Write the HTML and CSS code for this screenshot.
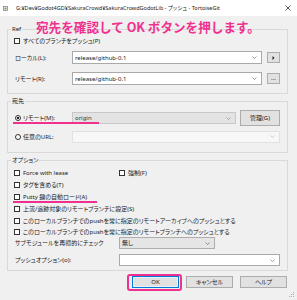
FILE: index.html
```html
<!DOCTYPE html>
<html lang="ja">
<head>
<meta charset="utf-8">
<link rel="stylesheet" href="styles.css">
</head>
<body>
<div class="window">
  <div class="titlebar">
    <svg class="app-icon" width="5" height="5" viewBox="0 0 5 5"><rect x="0.5" y="0.5" width="4" height="4" fill="#fff" stroke="#888" stroke-width="0.8"/><rect x="1.5" y="1.5" width="2" height="2" fill="#6a9a4a"/></svg>
    <span class="title">G:¥Dev¥Godot4GD¥SakuraCrowd¥SakuraCrowdGodotLib - プッシュ - TortoiseGit</span>
    <svg class="close" width="6" height="6" viewBox="0 0 6 6"><path d="M0.5 0.5 L5.5 5.5 M5.5 0.5 L0.5 5.5" stroke="#333" stroke-width="0.8"/></svg>
  </div>
  <div class="content">
    <fieldset class="group group-ref">
      <legend>Ref</legend>
      <div class="row row-check first"><span class="box"></span><span>すべてのブランチをプッシュ(P)</span></div>
      <div class="row row-field local">
        <span class="lbl">ローカル(L):</span>
        <div class="combo grow"><span>release/github-0.1</span><svg class="chev" width="5" height="3" viewBox="0 0 5 3"><path d="M0.5 0.5 L2.5 2.5 L4.5 0.5" fill="none" stroke="#777" stroke-width="0.7"/></svg></div>
        <div class="btn mini"><svg width="3" height="4" viewBox="0 0 3 4"><path d="M0.5 0 L2.5 2 L0.5 4 Z" fill="#222"/></svg></div>
      </div>
      <div class="row row-field remote">
        <span class="lbl">リモート(R):</span>
        <div class="combo grow"><span>release/github-0.1</span><svg class="chev" width="5" height="3" viewBox="0 0 5 3"><path d="M0.5 0.5 L2.5 2.5 L4.5 0.5" fill="none" stroke="#777" stroke-width="0.7"/></svg></div>
        <div class="btn mini dots">...</div>
      </div>
    </fieldset>

    <fieldset class="group group-dest">
      <legend>宛先</legend>
      <div class="row row-field dest-remote">
        <span class="lbl"><span class="radio on"></span>リモート(M):</span>
        <div class="combo disabled grow"><span>origin</span><svg class="chev" width="5" height="3" viewBox="0 0 5 3"><path d="M0.5 0.5 L2.5 2.5 L4.5 0.5" fill="none" stroke="#888" stroke-width="0.7"/></svg></div>
        <div class="btn manage">管理(G)</div>
      </div>
      <div class="row row-field dest-url">
        <span class="lbl"><span class="radio"></span>任意のURL:</span>
        <div class="combo faint grow"><span></span><svg class="chev" width="5" height="3" viewBox="0 0 5 3"><path d="M0.5 0.5 L2.5 2.5 L4.5 0.5" fill="none" stroke="#bbb" stroke-width="0.7"/></svg></div>
      </div>
    </fieldset>

    <fieldset class="group group-opt">
      <legend>オプション</legend>
      <div class="row row-check first h12">
        <span class="opt-col"><span class="box"></span><span>Force with lease</span></span>
        <span class="box"></span><span>強制(F)</span>
      </div>
      <div class="row row-check h12"><span class="box"></span><span>タグを含める(T)</span></div>
      <div class="row row-check h12"><span class="box"></span><span>Putty 鍵の自動ロード(A)</span></div>
      <div class="row row-check h12"><span class="box"></span><span>上流/追跡対象のリモートブランチに設定(S)</span></div>
      <div class="row row-check h11"><span class="box"></span><span>このローカルブランチでのpushを常に指定のリモートアーカイブへのプッシュとする</span></div>
      <div class="row row-check h11"><span class="box"></span><span>このローカルブランチでのpushを常に指定のリモートブランチへのプッシュとする</span></div>
      <div class="row row-field sub">
        <span class="lbl wide">サブモジュールを再帰的にチェック</span>
        <div class="combo list"><span>無し</span><svg class="chev" width="5" height="3" viewBox="0 0 5 3"><path d="M0.5 0.5 L2.5 2.5 L4.5 0.5" fill="none" stroke="#666" stroke-width="0.7"/></svg></div>
      </div>
      <div class="row row-field pushopt">
        <span class="lbl wide">プッシュオプション(o):</span>
        <div class="combo grow"><span></span><svg class="chev" width="5" height="3" viewBox="0 0 5 3"><path d="M0.5 0.5 L2.5 2.5 L4.5 0.5" fill="none" stroke="#777" stroke-width="0.7"/></svg></div>
      </div>
    </fieldset>

    <div class="buttons">
      <div class="btn action default">OK</div>
      <div class="btn action">キャンセル</div>
      <div class="btn action">ヘルプ</div>
    </div>
  </div>

  <svg class="grip" width="6" height="6" viewBox="0 0 6 6"><g fill="#b0b0b0"><rect x="4" y="0" width="1" height="1"/><rect x="2" y="2" width="1" height="1"/><rect x="4" y="2" width="1" height="1"/><rect x="0" y="4" width="1" height="1"/><rect x="2" y="4" width="1" height="1"/><rect x="4" y="4" width="1" height="1"/></g></svg>

  <div class="note">宛先を確認して OK ボタンを押します。</div>
  <div class="mark mark-remote"></div>
  <div class="mark mark-putty"></div>
  <div class="mark-ok"></div>
</div>
</body>
</html>
```

FILE: styles.css
```css
html, body {
  margin: 0;
  padding: 0;
}
body {
  background: #f0f0f0;
  font-family: "Noto Sans", "Noto Sans CJK JP", sans-serif;
  font-size: 6px;
  line-height: 8px;
  color: #1a1a1a;
  font-feature-settings: "palt";
}
.window {
  position: relative;
  width: 297px;
  height: 300px;
  overflow: hidden;
  background: #f0f0f0;
}
.titlebar {
  height: 16px;
  background: #ffffff;
  display: flex;
  align-items: center;
  padding: 0 6px 0 3px;
  box-sizing: border-box;
}
.app-icon {
  flex: none;
  margin-right: 8px;
}
.title {
  flex: 1;
  white-space: nowrap;
  color: #222;
  font-size: 5.5px;
}
.close {
  flex: none;
}
.content {
  padding: 0 9px 0 7px;
}
.group {
  margin: 0;
  padding: 0 7px 0 6px;
  border: 1px solid #d9d9d9;
  min-width: 0;
}
.group legend {
  padding: 0 1px;
  margin-left: -3px;
  height: 8px;
  line-height: 8px;
  color: #1a1a1a;
}
.group-ref {
  margin-top: 9px;
  padding-bottom: 8px;
}
.group-dest {
  margin-top: 3px;
  padding-bottom: 9px;
}
.group-opt {
  margin-top: 3px;
  padding-bottom: 4px;
}
.row {
  display: flex;
  align-items: center;
  white-space: nowrap;
}
.row-check {
  height: 11px;
}
.row-check.h12 { height: 12px; }
.row-check.h11 { height: 11px; }
.group-ref .row-check.first { margin-top: 2px; }
.group-opt .row-check.first { margin-top: 3px; }
.box {
  flex: none;
  width: 4px;
  height: 4px;
  border: 1px solid #333;
  background: #fff;
  margin-right: 3px;
}
.opt-col {
  display: flex;
  align-items: center;
  width: 105px;
}
.radio {
  flex: none;
  width: 4px;
  height: 4px;
  border: 1px solid #333;
  border-radius: 50%;
  background: #fff;
  margin-right: 2px;
  position: relative;
  display: inline-block;
}
.radio.on {
  background: radial-gradient(circle, #222 0 1.3px, #fff 1.6px);
}
.row-field {
  height: 13px;
}
.lbl {
  flex: none;
  width: 58px;
  display: flex;
  align-items: center;
  padding-left: 1px;
  box-sizing: border-box;
}
.lbl.wide {
  width: 105px;
}
.local { margin-top: 5px; }
.remote { margin-top: 8px; }
.dest-remote { margin-top: 5px; height: 16px; }
.dest-url { margin-top: 4px; }
.sub { height: 12px; }
.pushopt { margin-top: 5px; height: 12px; }
.combo {
  box-sizing: border-box;
  height: 13px;
  background: #fff;
  border: 1px solid #a9a9a9;
  display: flex;
  align-items: center;
  justify-content: space-between;
  padding: 0 4px 0 2px;
  min-width: 0;
}
.combo.grow { flex: 1; }
.combo.disabled {
  height: 12px;
  background: #e3e3e3;
  border-color: #c8c8c8;
  color: #333;
}
.combo.faint {
  height: 12px;
  background: #f7f7f7;
  border-color: #e2e2e2;
}
.combo.list {
  width: 96px;
  height: 12px;
  background: #e5e5e5;
  border-color: #adadad;
}
.pushopt .combo { height: 12px; }
.chev { flex: none; }
.btn {
  box-sizing: border-box;
  background: #e1e1e1;
  border: 1px solid #adadad;
  display: flex;
  align-items: center;
  justify-content: center;
  flex: none;
  color: #1a1a1a;
}
.mini {
  width: 13px;
  height: 11px;
  margin-left: 5px;
}
.dots {
  font-size: 6px;
  line-height: 6px;
  padding-bottom: 2px;
}
.manage {
  width: 40px;
  height: 16px;
  margin-left: 4px;
}
.buttons {
  display: flex;
  justify-content: flex-end;
  gap: 7px;
  margin-top: 5px;
  padding-right: 1px;
}
.action {
  width: 47px;
  height: 12px;
}
.action.default {
  border-color: #0078d7;
  box-shadow: inset 0 0 0 1px #e8f1fa;
}
.grip {
  position: absolute;
  right: 2px;
  bottom: 2px;
}
.note {
  position: absolute;
  left: 36px;
  top: 19px;
  font-size: 12.6px;
  line-height: 16px;
  font-weight: bold;
  color: #f0308e;
  white-space: nowrap;
  font-family: "Noto Sans CJK JP", sans-serif;
  font-feature-settings: normal;
}
.mark {
  position: absolute;
  height: 2px;
  background: #f0308e;
}
.mark-remote {
  left: 13px;
  top: 122px;
  width: 86px;
}
.mark-putty {
  left: 13px;
  top: 201px;
  width: 84px;
}
.mark-ok {
  position: absolute;
  left: 127px;
  top: 274px;
  width: 55px;
  height: 17px;
  box-sizing: border-box;
  border: 2px solid #f0308e;
  border-radius: 3px;
}
```
